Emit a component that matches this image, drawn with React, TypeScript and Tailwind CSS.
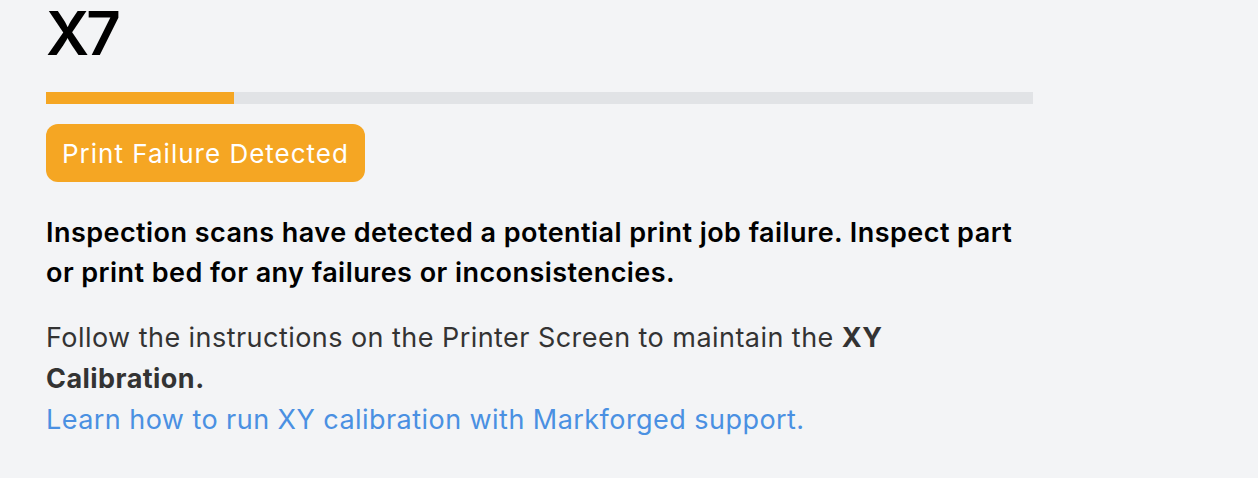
import React from 'react';

const progress = 19;

export default function App() {
  return (
    <div className="min-h-screen w-full bg-[#f3f4f6] font-['Inter','Noto_Sans',sans-serif] antialiased">
      <div className="w-[987px] ml-[46px]">
        {/* Printer name */}
        <h1 className="text-[60px] leading-[66px] font-semibold text-black tracking-[-3px]">X7</h1>

        {/* Progress */}
        <div className="mt-[26px] h-[12px] w-full bg-[#e1e3e6]">
          <div className="h-full bg-[#f5a623]" style={{ width: `${progress}%` }} />
        </div>

        {/* Status badge */}
        <div className="mt-[20px] inline-flex h-[58px] items-center rounded-[12px] bg-[#f5a623] px-[16px] text-[26px] tracking-[1px] text-white">
          Print Failure Detected
        </div>

        <p className="mt-[31px] text-[27px] leading-[40px] font-semibold tracking-[0.45px] text-black">
          Inspection scans have detected a potential print job failure. Inspect part or print bed for any failures or
          inconsistencies.
        </p>

        <div className="mt-[24px] w-[960px] text-[27px] leading-[41px] tracking-[0.45px] text-[#333333]">
          <p>
            Follow the instructions on the Printer Screen to maintain the <span className="font-bold">XY Calibration.</span>
          </p>
          <a href="#" className="text-[#4a90e2]">
            Learn how to run XY calibration with Markforged support.
          </a>
        </div>
      </div>
    </div>
  );
}
